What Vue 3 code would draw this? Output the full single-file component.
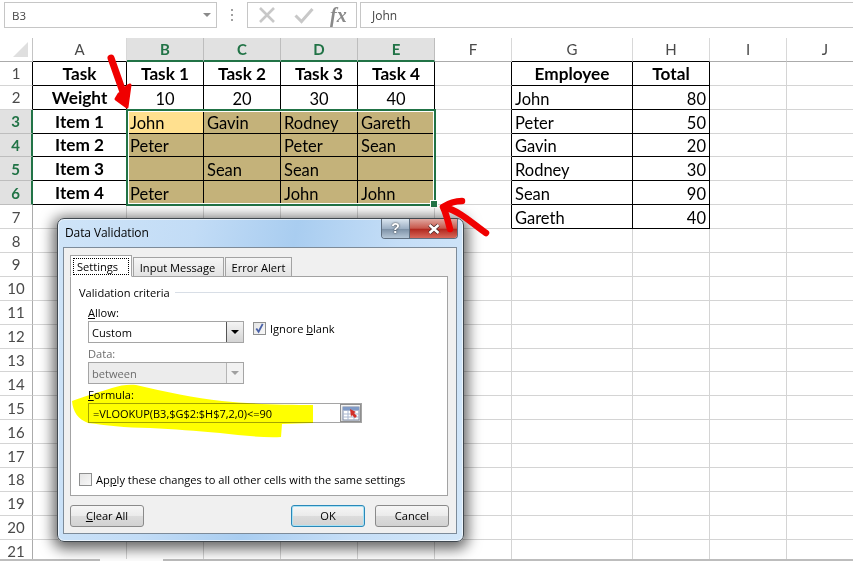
<script setup>
const columns = ['A', 'B', 'C', 'D', 'E', 'F', 'G', 'H', 'I', 'J']
const rowNumbers = Array.from({ length: 21 }, (_, i) => i + 1)
const selectedCols = ['B', 'C', 'D', 'E']
const selectedRows = [3, 4, 5, 6]

const data = {
  1: { A: 'Task', B: 'Task 1', C: 'Task 2', D: 'Task 3', E: 'Task 4', G: 'Employee', H: 'Total' },
  2: { A: 'Weight', B: '10', C: '20', D: '30', E: '40', G: 'John', H: '80' },
  3: { A: 'Item 1', B: 'John', C: 'Gavin', D: 'Rodney', E: 'Gareth', G: 'Peter', H: '50' },
  4: { A: 'Item 2', B: 'Peter', D: 'Peter', E: 'Sean', G: 'Gavin', H: '20' },
  5: { A: 'Item 3', C: 'Sean', D: 'Sean', G: 'Rodney', H: '30' },
  6: { A: 'Item 4', B: 'Peter', D: 'John', E: 'John', G: 'Sean', H: '90' },
  7: { G: 'Gareth', H: '40' }
}

function cellClass(r, c) {
  const inMain = r <= 6 && 'ABCDE'.includes(c)
  const inSide = r <= 7 && 'GH'.includes(c)
  const header = r === 1 && (inMain || inSide)
  return {
    boxed: inMain || inSide,
    beforeSide: c === 'F' && r <= 7,
    bold: header || (c === 'A' && r <= 6),
    center: header || (c === 'A' && r <= 6) || (r === 2 && 'BCDE'.includes(c)),
    right: c === 'H' && r > 1,
    fill: r >= 3 && r <= 6 && 'BCDE'.includes(c),
    active: r === 3 && c === 'B'
  }
}
</script>

<template>
  <div class="page">
    <div class="formula-bar">
      <div class="name-box">
        <span>B3</span>
        <i class="caret"></i>
      </div>
      <div class="dots"><i></i><i></i><i></i></div>
      <div class="fx-box">
        <svg width="18" height="18" viewBox="0 0 18 18"><path d="M2 2l14 14M16 2L2 16" fill="none" stroke="#c8c8c8" stroke-width="2.6"/></svg>
        <svg width="20" height="18" viewBox="0 0 20 18"><path d="M1.500 9.500l6 6L18.500 3" fill="none" stroke="#c8c8c8" stroke-width="3"/></svg>
        <span class="fx">fx</span>
      </div>
      <div class="formula-input">John</div>
    </div>

    <div class="sheet">
      <div class="grid">
        <div class="corner"><i></i></div>
        <div
          v-for="c in columns"
          :key="c"
          class="col-head"
          :class="{ sel: selectedCols.includes(c), sideHead: c === 'G' || c === 'H' }"
        >{{ c }}</div>
        <template v-for="r in rowNumbers" :key="r">
          <div class="row-head" :class="{ sel: selectedRows.includes(r), boxedHead: r <= 2 }">{{ r }}</div>
          <div v-for="c in columns" :key="c" class="cell" :class="cellClass(r, c)">{{ data[r]?.[c] }}</div>
        </template>
      </div>
      <div class="selection"><i class="handle"></i></div>
    </div>

    <div class="tabs-edge">
      <i class="edge-a"></i><i class="edge-gap"></i><i class="edge-b"></i>
    </div>

    <div class="dialog">
      <div class="titlebar">
        <span class="title">Data Validation</span>
        <div class="caption-buttons">
          <div class="help">?</div>
          <div class="close">
            <svg width="14" height="12" viewBox="0 0 14 12"><path d="M2.500 2l9 8M11.500 2l-9 8" fill="none" stroke="#4a2a2a" stroke-width="4"/><path d="M2.500 2l9 8M11.500 2l-9 8" fill="none" stroke="#fff" stroke-width="2.400"/></svg>
          </div>
        </div>
      </div>
      <div class="client">
        <div class="tab-row">
          <div class="tab on"><span class="focus">Settings</span></div>
          <div class="tab t-input">Input Message</div>
          <div class="tab t-error">Error Alert</div>
        </div>
        <div class="panel">
          <div class="group-title"><span>Validation criteria</span><i></i></div>
          <div class="fields">
            <label class="field-label"><u>A</u>llow:</label>
            <div class="allow-row">
              <div class="combo">
                <span>Custom</span>
                <div class="drop"><i></i></div>
              </div>
              <div class="check-row ignore">
                <div class="checkbox">
                  <svg width="12" height="12" viewBox="0 0 12 12"><path d="M2.500 6.500L5 10l4.500-8.500" fill="none" stroke="#4a62a8" stroke-width="2"/></svg>
                </div>
                <span>Ignore <u>b</u>lank</span>
              </div>
            </div>
            <label class="field-label muted data-label">Data:</label>
            <div class="combo disabled">
              <span>between</span>
              <div class="drop"><i></i></div>
            </div>
            <label class="field-label formula-label"><u>F</u>ormula:</label>
            <div class="formula-field">
              <span class="formula-text">=VLOOKUP(B3,$G$2:$H$7,2,0)&lt;=90</span>
              <div class="ref-btn">
                <svg width="18" height="15" viewBox="0 0 18 15">
                  <rect x="1" y="1" width="16" height="13" fill="#fff" stroke="#7c8aa5"/>
                  <path d="M1 4.500h16M1 8h16M1 11h16M6 1v13M12 1v13" stroke="#a9b7d0" stroke-width="1"/>
                  <path d="M1 1h16v3H1z" fill="#7f9ac6"/>
                  <path d="M8 3l6 3-2 1 3 3-2 2-3-3-1 2z" fill="#d2302a"/>
                </svg>
              </div>
            </div>
          </div>
          <div class="check-row apply">
            <div class="checkbox"></div>
            <span>Ap<u>p</u>ly these changes to all other cells with the same settings</span>
          </div>
        </div>
        <div class="actions">
          <button class="btn"><u>C</u>lear All</button>
          <div class="right-actions">
            <button class="btn primary">OK</button>
            <button class="btn">Cancel</button>
          </div>
        </div>
      </div>
    </div>

    <svg class="highlight" width="853" height="561" viewBox="0 0 853 561">
      <path d="M72 401C85 396 100 392 112 388C120 385 130 384 136 385C165 392 195 398 222 401C250 404 285 405 313 405L313 423L282 424L281 437C262 438 240 435 220 433C195 431 175 429 150 428C125 428 105 425 88 423C78 419 73 412 72 401Z" fill="#ffff00"/>
    </svg>
    <svg class="marks" width="853" height="561" viewBox="0 0 853 561">
      <path d="M111 58l12 34" fill="none" stroke="#f00000" stroke-width="7" stroke-linecap="round"/>
      <path d="M116 99l11 8 3-22c-3 1-5 4-5 7l-6 2z" fill="#f00000" stroke="#f00000" stroke-width="3" stroke-linejoin="round"/>
      <path d="M462 201c-7 0-13 2-19 6 3 6 5 14 7 22M444 207c16 4 29 17 42 26" fill="none" stroke="#f00000" stroke-width="6.500" stroke-linecap="round" stroke-linejoin="round"/>
    </svg>
  </div>
</template>

<style scoped>
.page {
  position: relative;
  width: 853px;
  height: 561px;
  overflow: hidden;
  background: #fff;
  font-family: "Lato", "Liberation Sans", sans-serif;
  display: flex;
  flex-direction: column;
}

/* formula bar */
.formula-bar {
  display: flex;
  height: 38px;
  padding-top: 2px;
  box-sizing: border-box;
  flex: none;
  font-family: "Open Sans", "Liberation Sans", sans-serif;
  font-size: 11.500px;
  color: #444;
}
.name-box {
  width: 213px;
  height: 26px;
  margin-left: 4px;
  box-sizing: border-box;
  border: 1px solid #c6c6c6;
  display: flex;
  align-items: center;
  justify-content: space-between;
  padding: 0 5px 0 7px;
}
.caret {
  width: 0;
  height: 0;
  border-left: 4px solid transparent;
  border-right: 4px solid transparent;
  border-top: 4px solid #8a8a8a;
}
.dots {
  width: 30px;
  display: flex;
  flex-direction: column;
  align-items: center;
  justify-content: center;
  gap: 3px;
  height: 26px;
}
.dots i {
  width: 2px;
  height: 2px;
  background: #a0a0a0;
}
.fx-box {
  width: 110px;
  height: 26px;
  box-sizing: border-box;
  border: 1px solid #c6c6c6;
  display: flex;
  align-items: center;
  padding-left: 10px;
}
.fx-box svg:nth-child(2) {
  margin-left: 18px;
}
.fx {
  margin-left: 16px;
  font: italic bold 20px "Liberation Serif", serif;
  color: #8a8a8a;
  line-height: 1;
}
.formula-input {
  flex: 1;
  height: 26px;
  box-sizing: border-box;
  margin-left: 3px;
  border: 1px solid #c6c6c6;
  border-right: 0;
  display: flex;
  align-items: center;
  padding-left: 11px;
  font-size: 12px;
}

/* sheet */
.sheet {
  position: relative;
  flex: 1;
  overflow: hidden;
}
.grid {
  display: grid;
  grid-template-columns: 33px 94px repeat(5, 77px) 121px repeat(3, 77px);
  grid-auto-rows: 23.9px;
  font-size: 16.500px;
  color: #000;
}
.corner {
  grid-row: 1;
  border-right: 1px solid #c4c4c4;
  border-bottom: 1px solid #ababab;
  position: relative;
}
.corner i {
  position: absolute;
  right: 4px;
  bottom: 4px;
  width: 0;
  height: 0;
  border-left: 15px solid transparent;
  border-bottom: 15px solid #dfdfdf;
}
.col-head {
  display: flex;
  align-items: center;
  justify-content: center;
  box-sizing: border-box;
  border-right: 1px solid #d8d8d8;
  border-bottom: 1px solid #ababab;
  color: #4a4a4a;
  font-size: 15px;
  background: #fff;
}
.col-head.sel {
  background: #e1e1e1;
  color: #217346;
  font-weight: 700;
  border-right-color: #bdbdbd;
  border-bottom: 2px solid #217346;
}
.col-head.sideHead,
.col-head:nth-child(2) {
  border-bottom-color: #000;
}
.row-head {
  display: flex;
  align-items: center;
  justify-content: center;
  box-sizing: border-box;
  border-right: 1px solid #ababab;
  border-bottom: 1px solid #d4d4d4;
  color: #4a4a4a;
  font-size: 15px;
}
.row-head.sel {
  background: #e1e1e1;
  color: #217346;
  font-weight: 700;
  border-bottom-color: #bdbdbd;
  border-right: 2px solid #217346;
}
.row-head.boxedHead {
  border-right-color: #000;
}
.cell {
  box-sizing: border-box;
  border-right: 1px solid #d4d4d4;
  border-bottom: 1px solid #d4d4d4;
  display: flex;
  align-items: flex-end;
  padding: 0 3px 0 3px;
  line-height: 19px;
  white-space: nowrap;
  overflow: hidden;
}
.boxed {
  border-color: #000;
}
.beforeSide {
  border-right-color: #000;
}
.bold {
  font-weight: 700;
  font-size: 17.200px;
  line-height: 22px;
}
.center {
  justify-content: center;
}
.right {
  justify-content: flex-end;
}
.fill {
  background: #c4b27a;
}
.active {
  background: #ffe08f;
}
.selection {
  position: absolute;
  left: 126px;
  top: 71px;
  width: 310px;
  height: 97px;
  box-sizing: border-box;
  border: 2px solid #217346;
  box-shadow: inset 0 0 0 1px #fff;
}
.handle {
  position: absolute;
  right: -4px;
  bottom: -4px;
  width: 6px;
  height: 6px;
  background: #217346;
  border: 1px solid #fff;
}
.tabs-edge {
  flex: none;
  height: 2px;
  display: flex;
}
.edge-a { width: 100px; background: #bdbdbd; }
.edge-gap { width: 63px; }
.edge-b { flex: 1; background: #bdbdbd; }

/* dialog */
.dialog {
  position: absolute;
  left: 57px;
  top: 218px;
  width: 407px;
  height: 324px;
  box-sizing: border-box;
  padding: 0 6px 7px 5px;
  border: 1px solid #40484f;
  border-radius: 7px;
  background: linear-gradient(100deg, #cfe4f8 0%, #c2dcf6 30%, #a9cdf0 52%, #c5def7 75%, #d3e7f9 100%);
  box-shadow: 0 3px 14px 4px rgba(0, 0, 0, 0.6), inset 0 0 0 1px rgba(255, 255, 255, 0.6);
  display: flex;
  flex-direction: column;
  font-family: "Open Sans", "Liberation Sans", sans-serif;
  font-size: 11.100px;
  color: #000;
  z-index: 2;
}
.titlebar {
  height: 28px;
  flex: none;
  display: flex;
  justify-content: space-between;
  align-items: flex-start;
}
.title {
  margin: 5px 0 0 2px;
  font-size: 12px;
  letter-spacing: -0.1px;
}
.caption-buttons {
  display: flex;
  height: 20px;
  border: 1px solid #5f6f80;
  border-top: 0;
  border-radius: 0 0 4px 4px;
  overflow: hidden;
  margin-right: -1px;
  box-sizing: border-box;
}
.help {
  width: 27px;
  background: linear-gradient(#dbe6f0, #9db0c4 50%, #7f93a8 55%, #b5c6d6);
  color: #fff;
  font: 700 14px/18px "Liberation Sans", sans-serif;
  text-align: center;
  text-shadow: 0 0 2px #222;
  border-right: 1px solid #5f6f80;
}
.close {
  width: 47px;
  background: linear-gradient(#e0a8a0, #c8584c 48%, #b22a20 55%, #d8685a);
  display: flex;
  align-items: center;
  justify-content: center;
}
.client {
  flex: 1;
  background: #f0f0f0;
  border: 1px solid #7d8b99;
  padding: 7px 8px 0 6px;
  display: flex;
  flex-direction: column;
  min-height: 0;
}
.tab-row {
  display: flex;
  height: 22px;
  flex: none;
  align-items: flex-end;
  position: relative;
  z-index: 1;
  margin-bottom: -1px;
}
.tab {
  height: 20px;
  box-sizing: border-box;
  display: flex;
  align-items: center;
  justify-content: center;
  border: 1px solid #a3a3a3;
  background: linear-gradient(#f6f6f6, #e3e3e3);
  margin-left: 1px;
}
.t-input { width: 91px; padding-right: 2px; }
.t-error { width: 67px; }
.tab.on {
  height: 22px;
  width: 62px;
  margin-left: 0;
  padding: 0 2px;
  background: #fff;
  border-bottom-color: #fff;
}
.focus {
  border: 1px dotted #000;
  padding: 0 3px;
  line-height: 15px;
  width: 100%;
  box-sizing: border-box;
  white-space: nowrap;
}
.panel {
  height: 220px;
  flex: none;
  background: #fff;
  border: 1px solid #a3a3a3;
  box-sizing: border-box;
  padding: 8px 6px 0 8px;
  display: flex;
  flex-direction: column;
}
.group-title {
  display: flex;
  align-items: center;
  gap: 5px;
  height: 15px;
}
.group-title i {
  flex: 1;
  height: 1px;
  background: #d8dee6;
}
.fields {
  padding-left: 9px;
  display: flex;
  flex-direction: column;
}
.field-label {
  height: 15px;
  line-height: 15px;
  margin-top: 5px;
}
.muted { color: #6d6d6d; }
.allow-row {
  display: flex;
  align-items: flex-start;
  margin-top: 1px;
}
.combo {
  width: 156px;
  height: 22px;
  box-sizing: border-box;
  border: 1px solid #a5a5a5;
  background: #fff;
  display: flex;
  align-items: center;
  justify-content: space-between;
  padding-left: 3px;
}
.drop {
  width: 17px;
  height: 100%;
  box-sizing: border-box;
  border-left: 1px solid #555;
  background: linear-gradient(#f4f4f4, #d4d4d4);
  display: flex;
  align-items: center;
  justify-content: center;
}
.drop i {
  width: 0;
  height: 0;
  border-left: 4px solid transparent;
  border-right: 4px solid transparent;
  border-top: 4px solid #000;
}
.combo.disabled {
  background: #ececec;
  color: #6d6d6d;
  margin-top: 1px;
}
.combo.disabled .drop {
  background: #f2f2f2;
  border-left-color: #b5b5b5;
}
.combo.disabled .drop i { border-top-color: #a0a0a0; }
.data-label { margin-top: 3px; }
.formula-label { margin-top: 3px; }
.check-row {
  display: flex;
  align-items: center;
  gap: 4px;
}
.ignore {
  margin: 0 0 0 9px;
  height: 14px;
}
.checkbox {
  width: 13px;
  height: 13px;
  box-sizing: border-box;
  border: 1px solid #8e8f8f;
  background: linear-gradient(135deg, #e4e4e4, #f8f8f8);
  display: flex;
  align-items: center;
  justify-content: center;
}
.formula-field {
  width: 274px;
  height: 20px;
  box-sizing: border-box;
  border: 1px solid #a5a5a5;
  display: flex;
  align-items: center;
  justify-content: space-between;
  padding-left: 4px;
  margin-top: 1px;
}
.formula-text {
  white-space: nowrap;
  font-size: 11px;
  letter-spacing: -0.03px;
}
.ref-btn {
  width: 21px;
  height: 100%;
  box-sizing: border-box;
  border: 1px solid #8f8f8f;
  background: linear-gradient(#f5f5f5, #dcdcdc);
  display: flex;
  align-items: center;
  justify-content: center;
}
.apply {
  margin-top: 49px;
}
.actions {
  display: flex;
  justify-content: space-between;
  padding-top: 9px;
}
.right-actions {
  display: flex;
  gap: 10px;
  margin-right: -1px;
}
.btn {
  width: 74px;
  height: 22px;
  padding: 0 0 2px;
  box-sizing: border-box;
  border: 1px solid #8a8a8a;
  border-radius: 3px;
  background: linear-gradient(#f6f6f6 0%, #ebebeb 48%, #dcdcdc 52%, #d2d2d2 100%);
  font: inherit;
  color: #000;
}
.btn.primary {
  border: 1px solid #2a88b8;
  box-shadow: inset 0 0 0 1px #a9e2f5;
}

/* annotations painted over the screenshot */
.highlight {
  position: absolute;
  left: 0;
  top: 0;
  pointer-events: none;
  mix-blend-mode: multiply;
  z-index: 3;
}
.marks {
  position: absolute;
  left: 0;
  top: 0;
  pointer-events: none;
  z-index: 4;
}
</style>

<style>
html, body { margin: 0; overflow: hidden; background: #fff; }
</style>
